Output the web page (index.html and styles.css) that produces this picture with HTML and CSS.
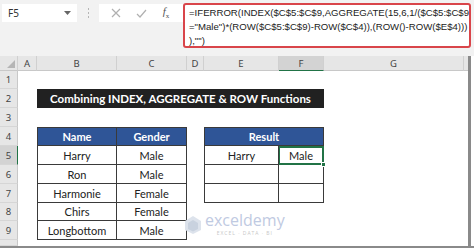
FILE: index.html
```html
<!DOCTYPE html>
<html lang="en">
<head>
    <meta charset="UTF-8">
    <meta name="viewport" content="width=device-width, initial-scale=1.0">
    <title>Combining INDEX, AGGREGATE &amp; ROW Functions</title>
    <link rel="stylesheet" href="styles.css">
</head>
<body>
    <div class="app">
        <div class="green-strip"></div>
        <div class="main">
            <div class="formula-bar">
                <div class="name-box">
                    <span>F5</span>
                    <svg class="arrow" width="7" height="4" viewBox="0 0 7 4"><path d="M0 0h7L3.5 4z" fill="#666"/></svg>
                </div>
                <div class="dots"><span></span><span></span><span></span></div>
                <div class="fx-box">
                    <svg width="10" height="10" viewBox="0 0 10 10"><path d="M1 1l8 8M9 1l-8 8" stroke="#b0b0b0" stroke-width="1.2"/></svg>
                    <svg width="11" height="9" viewBox="0 0 11 9"><path d="M1 5l3 3 6-7" stroke="#b0b0b0" stroke-width="1.2" fill="none"/></svg>
                    <span class="fx"><i>f</i><sub>x</sub></span>
                </div>
                <div class="formula">=IFERROR(INDEX($C$5:$C$9,AGGREGATE(15,6,1/($C$5:$C$9
="Male")*(ROW($C$5:$C$9)-ROW($C$4)),(ROW()-ROW($E$4)))
),"")</div>
            </div>

            <div class="sheet-wrap">
                <div class="sheet">
                    <div class="corner"><svg width="8" height="8" viewBox="0 0 8 8"><path d="M8 0v8H0z" fill="#b5b5b5"/></svg></div>
                    <div class="col-head c2">A</div>
                    <div class="col-head c3">B</div>
                    <div class="col-head c4">C</div>
                    <div class="col-head c5">D</div>
                    <div class="col-head c6">E</div>
                    <div class="col-head c7 active">F</div>
                    <div class="col-head c8">G</div>
                    <div class="col-head c9 last"></div>

                    <div class="row-head r2">1</div>
                    <div class="row-head r3">2</div>
                    <div class="row-head r4">3</div>
                    <div class="row-head r5">4</div>
                    <div class="row-head r6 active">5</div>
                    <div class="row-head r7">6</div>
                    <div class="row-head r8">7</div>
                    <div class="row-head r9">8</div>
                    <div class="row-head r10">9</div>
                    <div class="row-head r11"></div>

                    <div class="title">Combining INDEX, AGGREGATE &amp; ROW Functions</div>

                    <div class="cell head first c3 r5">Name</div>
                    <div class="cell head c4 r5">Gender</div>

                    <div class="cell first c3 r6">Harry</div>
                    <div class="cell c4 r6">Male</div>
                    <div class="cell first c3 r7">Ron</div>
                    <div class="cell c4 r7">Male</div>
                    <div class="cell first c3 r8">Harmonie</div>
                    <div class="cell c4 r8">Female</div>
                    <div class="cell first c3 r9">Chirs</div>
                    <div class="cell c4 r9">Female</div>
                    <div class="cell first c3 r10">Longbottom</div>
                    <div class="cell c4 r10">Male</div>

                    <div class="cell head first result r5">Result</div>
                    <div class="cell first c6 r6">Harry</div>
                    <div class="cell c7 r6 selected">Male<span class="handle"></span></div>
                    <div class="cell first c6 r7"></div>
                    <div class="cell c7 r7"></div>
                    <div class="cell first c6 r8"></div>
                    <div class="cell c7 r8"></div>
                </div>

                <div class="watermark">
                    <svg width="20" height="20" viewBox="0 0 20 20"><path d="M10 1l8 5v9l-8 4-8-4V6z" fill="#dde3ec"/><path d="M10 5l5 3v6l-5 2.5L5 14V8z" fill="#c9d2df"/></svg>
                    <div class="wm-text">
                        <span class="wm-name">exceldemy</span>
                        <span class="wm-tag">EXCEL · DATA · BI</span>
                    </div>
                </div>
                <div class="right-bar"></div>
            </div>
            <div class="bottom-bar"></div>
        </div>
    </div>
</body>
</html>
```

FILE: styles.css
```css
body {
    margin: 0;
    padding: 0;
    width: 474px;
    height: 248px;
    overflow: hidden;
    background-color: #f3f3f3;
    font-family: 'Lato', 'Noto Sans', sans-serif;
}

.app {
    display: flex;
    height: 248px;
}

.green-strip {
    width: 3px;
    background-color: #1e6b3e;
}

.main {
    flex: 1;
    display: flex;
    flex-direction: column;
}

/* formula bar */
.formula-bar {
    height: 56px;
    box-sizing: border-box;
    padding: 3px 4px 0 2px;
    display: flex;
    align-items: flex-start;
    background-color: #f2f2f2;
}

.name-box {
    width: 75px;
    height: 18px;
    margin-top: 1px;
    background-color: #fff;
    display: flex;
    align-items: center;
    justify-content: space-between;
    padding: 0 6px 0 6px;
    box-sizing: border-box;
    font-family: 'Noto Sans', sans-serif;
    font-size: 10px;
    color: #333;
}

.dots {
    width: 22px;
    height: 18px;
    margin-top: 1px;
    display: flex;
    flex-direction: column;
    align-items: center;
    justify-content: center;
    gap: 2px;
}

.dots span {
    width: 1px;
    height: 2px;
    background-color: #b5b5b5;
}

.fx-box {
    width: 84px;
    height: 18px;
    margin-top: 1px;
    background-color: #fff;
    display: flex;
    align-items: center;
    justify-content: space-around;
    padding: 0 6px 0 4px;
    box-sizing: border-box;
}

.fx {
    font-family: 'Liberation Serif', serif;
    font-size: 11px;
    color: #555;
}

.fx sub {
    font-size: 7px;
}

.formula {
    flex: 1;
    height: 45px;
    box-sizing: border-box;
    border: 2px solid #d9454a;
    border-radius: 3px;
    background-color: #fff;
    padding: 1px 0 0 4px;
    white-space: pre;
    overflow: hidden;
    font-family: 'Liberation Sans', 'Noto Sans', sans-serif;
    font-size: 9.6px;
    line-height: 14px;
    color: #222;
}

/* sheet */
.sheet-wrap {
    position: relative;
    flex: 1;
    display: flex;
    background-color: #fff;
}

.sheet {
    display: grid;
    grid-template-columns: 18px 19px 80px 70px 17px 75px 45px 140px 4px;
    grid-template-rows: 15px 18px 19px 19px 19px 19px 19px 19px 18px 19px 1fr;
}

.right-bar {
    width: 3px;
    background-color: #8a8a8a;
}

.bottom-bar {
    height: 2px;
    background-color: #8a8a8a;
}

.corner {
    grid-column: 1;
    grid-row: 1;
    background-color: #e6e6e6;
    border-right: 1px solid #d0d0d0;
    border-bottom: 1px solid #c8c8c8;
    display: flex;
    align-items: flex-end;
    justify-content: flex-end;
    padding: 0 2px 2px 0;
}

.col-head {
    grid-row: 1;
    background-color: #e6e6e6;
    border-right: 1px solid #d0d0d0;
    border-bottom: 1px solid #c8c8c8;
    font-family: 'Noto Sans', sans-serif;
    font-size: 9.5px;
    color: #444;
    display: flex;
    align-items: center;
    justify-content: center;
}

.col-head.last {
    border-right: none;
}

.col-head.active {
    background-color: #d3d3d3;
    border-bottom: 1px solid #217346;
}

.row-head {
    grid-column: 1;
    background-color: #e6e6e6;
    border-right: 1px solid #c8c8c8;
    border-bottom: 1px solid #d6d6d6;
    font-family: 'Noto Sans', sans-serif;
    font-size: 9.5px;
    color: #444;
    display: flex;
    align-items: center;
    justify-content: center;
}

.row-head.active {
    background-color: #d3d3d3;
    border-right: 1px solid #217346;
}

.c2 { grid-column: 2; }
.c3 { grid-column: 3; }
.c4 { grid-column: 4; }
.c5 { grid-column: 5; }
.c6 { grid-column: 6; }
.c7 { grid-column: 7; }
.c8 { grid-column: 8; }
.c9 { grid-column: 9; }

.r2 { grid-row: 2; }
.r3 { grid-row: 3; }
.r4 { grid-row: 4; }
.r5 { grid-row: 5; }
.r6 { grid-row: 6; }
.r7 { grid-row: 7; }
.r8 { grid-row: 8; }
.r9 { grid-row: 9; }
.r10 { grid-row: 10; }
.r11 { grid-row: 11; }

.title {
    grid-column: 3 / 8;
    grid-row: 3;
    background-color: #212121;
    color: #fff;
    font-weight: bold;
    font-size: 11.5px;
    display: flex;
    align-items: center;
    justify-content: center;
}

.cell {
    box-sizing: border-box;
    border-right: 1px solid #3a3a3a;
    border-bottom: 1px solid #3a3a3a;
    font-size: 11px;
    color: #222;
    display: flex;
    align-items: center;
    justify-content: center;
}

.cell.first {
    border-left: 1px solid #3a3a3a;
}

.cell.head {
    border-top: 1px solid #3a3a3a;
    background-color: #2f5597;
    color: #fff;
    font-weight: bold;
}

.result {
    grid-column: 6 / 8;
}

.selected {
    position: relative;
    border: 2px solid #217346;
    border-left-width: 1px;
}

.handle {
    position: absolute;
    right: -4px;
    bottom: -4px;
    width: 5px;
    height: 5px;
    background-color: #217346;
    border: 1px solid #fff;
    box-sizing: border-box;
}

/* watermark */
.watermark {
    position: absolute;
    left: 183px;
    top: 157px;
    display: flex;
    align-items: center;
    gap: 2px;
}

.wm-text {
    display: flex;
    flex-direction: column;
    align-items: center;
    gap: 2px;
}

.wm-name {
    font-family: 'Open Sans', sans-serif;
    font-size: 16px;
    line-height: 15px;
    color: #bfcae2;
}

.wm-tag {
    font-family: 'Open Sans', sans-serif;
    font-size: 5px;
    line-height: 7px;
    letter-spacing: 1px;
    color: #c8c8c8;
}
```
